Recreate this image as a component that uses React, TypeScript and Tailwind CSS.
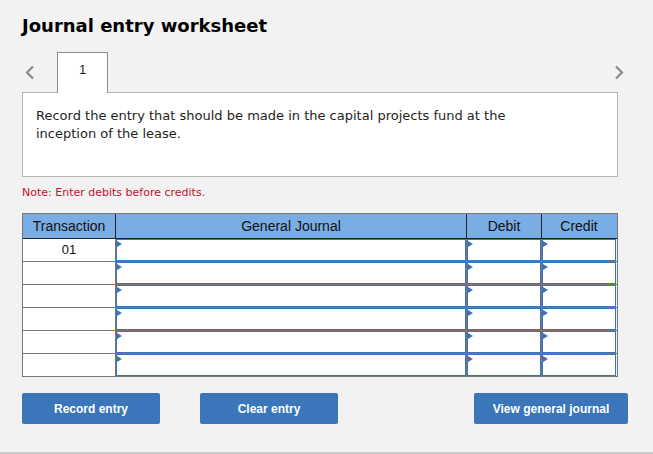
import React from "react";

const rows = ["01", "", "", "", "", ""];

function Arrow() {
  return (
    <span className="absolute left-0 top-[1px] h-0 w-0 border-y-[3px] border-l-[5px] border-y-transparent border-l-[#3c72b8]" />
  );
}

function InputCell({ w }: { w: string }) {
  return (
    <div className={`${w} relative h-full border border-[#3c72b8] bg-white`}>
      <Arrow />
    </div>
  );
}

function Chevron({ dir }: { dir: "left" | "right" }) {
  return (
    <svg width="10" height="15" viewBox="0 0 10 15" className="block">
      <polyline
        points={dir === "left" ? "8,1.5 2,7.5 8,13.5" : "2,1.5 8,7.5 2,13.5"}
        fill="none"
        stroke="#8a8a8a"
        strokeWidth="2.2"
      />
    </svg>
  );
}

export default function App() {
  return (
    <div className="w-[653px] h-[454px] bg-[#f2f2f2] border-b-2 border-[#c9c9c9] font-['DejaVu_Sans',Verdana,sans-serif] text-[#222]">
      <div className="h-[52px] pl-[22px] pt-[15px]">
        <h1 className="text-[18px] leading-[22px] font-bold text-black">Journal entry worksheet</h1>
      </div>

      {/* tabs */}
      <div className="flex h-[40px] items-center pl-[25px] pr-[29px]">
        <Chevron dir="left" />
        <div className="relative z-10 ml-[22px] -mb-px flex h-[41px] w-[51px] items-center justify-center self-end border border-b-0 border-[#8c8c8c] bg-white pb-[7px] font-['Liberation_Sans',Arial,sans-serif] text-[13px]">
          1
        </div>
        <div className="ml-auto">
          <Chevron dir="right" />
        </div>
      </div>

      <div className="ml-[22px] h-[85px] w-[596px] border border-[#b4b4b4] bg-white pl-[13px] pt-[14px] text-[13px] leading-[18px] text-[#1e1e1e]">
        <p className="w-[500px]">
          Record the entry that should be made in the capital projects fund at the inception of the lease.
        </p>
      </div>

      <p className="ml-[22px] mt-[9px] text-[11px] leading-[14px] text-[#c8102e]">
        Note: Enter debits before credits.
      </p>

      {/* journal table */}
      <div className="ml-[22px] mt-[13px] w-[596px] border border-[#777] font-['Liberation_Sans',Arial,sans-serif] text-[14px] text-[#111]">
        <div className="flex h-[25px] border-b border-[#222] bg-[#79ade3] leading-[24px]">
          <div className="w-[93px] border-r border-[#222] text-center">Transaction</div>
          <div className="w-[351px] border-r border-[#222] text-center">General Journal</div>
          <div className="w-[75px] border-r border-[#222] text-center">Debit</div>
          <div className="w-[74px] text-center">Credit</div>
        </div>
        {rows.map((r, i) => (
          <div key={i} className={`flex h-[22px] ${i > 0 ? "box-content border-t border-[#777]" : ""}`}>
            <div className="w-[93px] border-r border-[#777] bg-white text-center text-[13px] leading-[22px]">{r}</div>
            <InputCell w="w-[350px]" />
            <div className="w-px bg-[#777]" />
            <InputCell w="w-[74px]" />
            <div className="w-px bg-[#777]" />
            <InputCell w="w-[74px]" />
          </div>
        ))}
      </div>

      <div className="mt-[16px] flex pl-[22px] pr-[25px] font-['Liberation_Sans',Arial,sans-serif] text-[12px] font-bold text-white">
        <button className="h-[31px] w-[138px] rounded-[2px] bg-[#3a76b9]">Record entry</button>
        <button className="ml-[40px] h-[31px] w-[138px] rounded-[2px] bg-[#3a76b9]">Clear entry</button>
        <button className="ml-auto h-[31px] w-[154px] rounded-[2px] bg-[#3a76b9]">View general journal</button>
      </div>
    </div>
  );
}
